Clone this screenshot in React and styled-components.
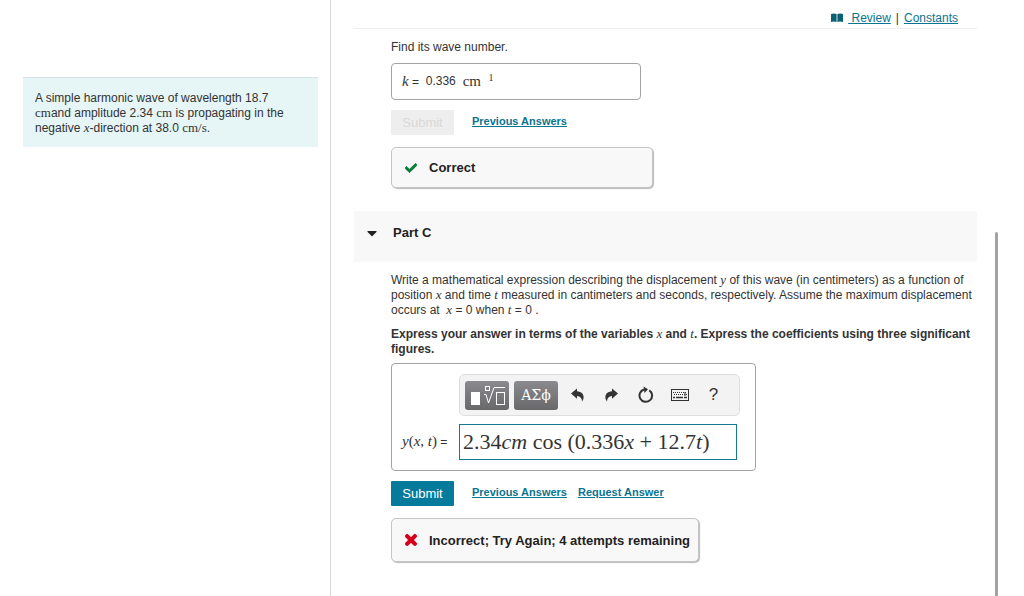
import React, { useState } from "react";
import styled, { createGlobalStyle } from "styled-components";
import { FaCheck, FaTimes, FaCaretDown } from "react-icons/fa";

const GlobalStyle = createGlobalStyle`
  * {
    box-sizing: border-box;
  }
  body {
    margin: 0;
    background-color: #ffffff;
    color: #333333;
    font-family: "Liberation Sans", Arial, sans-serif;
    font-size: 12px;
    line-height: 15px;
  }
  p, h2 {
    margin: 0;
  }
`;

const Page = styled.div`
  display: flex;
  min-height: 100vh;
`;

const Sidebar = styled.aside`
  flex: 0 0 331px;
  padding: 77px 12px 0 23px;
  border-right: 1px solid #d8d8d8;
`;

const Problem = styled.div`
  padding: 13px 12px 11px;
  background-color: #e6f5f6;
  border-top: 1px solid #d3e3e4;
`;

const Main = styled.main`
  flex: 1;
  min-width: 0;
  padding: 0 18px 0 23px;
`;

const ScrollRail = styled.div`
  flex: 0 0 29px;
  display: flex;
  padding-top: 232px;
`;

const ScrollThumb = styled.div`
  width: 3px;
  background-color: #a3a3a3;
  border-radius: 2px 2px 0 0;
`;

const TopBar = styled.nav`
  display: flex;
  align-items: center;
  justify-content: flex-end;
  gap: 5px;
  height: 29px;
  padding: 8px 19px 0 0;
  border-bottom: 1px solid #eeeeee;
`;

const Link = styled.a`
  color: #0b7490;
  text-decoration: underline;
`;

const ActionLink = styled(Link)`
  padding-bottom: 3px;
  font-size: 11px;
  font-weight: 700;
`;

const Body = styled.section`
  padding: 11px 0 0 37px;
`;

const MathText = styled.span`
  font-family: "Liberation Serif", "Times New Roman", serif;
  font-size: ${(props) => (props.$large ? "15px" : "13px")};
  line-height: 1;
  font-weight: 400;
  font-style: ${(props) => (props.$italic ? "italic" : "normal")};
`;

const Exponent = styled.sup`
  margin-left: 5px;
  padding-bottom: 8px;
  font-family: "Liberation Serif", "Times New Roman", serif;
  font-size: 10px;
  line-height: 1;
`;

const SolvedBox = styled.div`
  display: flex;
  align-items: center;
  width: 250px;
  height: 37px;
  margin-top: 8px;
  padding: 0 10px;
  border: 1px solid #a3a3a3;
  border-radius: 4px;
`;

const SolvedInput = styled.input`
  width: 37px;
  padding: 0;
  border: none;
  background: transparent;
  color: inherit;
  font: inherit;
  outline: none;
`;

const Actions = styled.div`
  display: flex;
  align-items: center;
  gap: 11px;
  margin-top: 10px;
`;

const SubmitButton = styled.button`
  width: 63px;
  height: 25px;
  margin-right: 7px;
  padding: 0;
  border: none;
  border-radius: 1px;
  background-color: #067a9b;
  color: #ffffff;
  font-family: inherit;
  font-size: 13px;
  &:disabled {
    background-color: #eeeeee;
    color: #d9d9d9;
  }
`;

const Feedback = styled.div`
  display: flex;
  align-items: center;
  gap: 12px;
  width: ${(props) => props.$width};
  height: ${(props) => props.$height};
  margin-top: 12px;
  padding: 0 12px;
  background-color: #f8f8f8;
  border: 1px solid #c4c4c4;
  border-radius: 5px;
  box-shadow: 1px 1px 1px #bbbbbb;
  color: #222222;
  font-size: 13px;
  font-weight: 700;
  white-space: nowrap;
`;

const FeedbackIcon = styled.span`
  display: flex;
  justify-content: center;
  flex: 0 0 13px;
  min-width: 0;
  svg {
    flex-shrink: 0;
    stroke: currentColor;
    stroke-width: 35px;
  }
`;

const PartHeader = styled.header`
  display: flex;
  gap: 13px;
  height: 51px;
  margin-top: 23px;
  padding: 14px 10px;
  background-color: #f8f8f8;
  color: #222222;
`;

const PartTitle = styled.h2`
  font-size: 13px;
  line-height: 16px;
`;

const Instruction = styled.p`
  margin-top: 9px;
  font-weight: 700;
`;

const AnswerBox = styled.div`
  display: grid;
  grid-template-columns: 49px 281px;
  column-gap: 8px;
  row-gap: 8px;
  align-items: center;
  align-content: start;
  width: 365px;
  height: 108px;
  margin-top: 6px;
  padding: 10px;
  border: 1px solid #a3a3a3;
  border-radius: 4px;
`;

const Toolbar = styled.div`
  grid-column: 2;
  display: flex;
  align-items: center;
  gap: 5px;
  height: 42px;
  padding: 0 5px;
  background-color: #f3f3f3;
  border: 1px solid #dedede;
  border-radius: 5px;
`;

const PaletteButton = styled.button`
  display: flex;
  align-items: center;
  justify-content: center;
  width: 44px;
  height: 29px;
  padding: 0;
  border: none;
  border-radius: 3px;
  background: linear-gradient(#8b8b8f, #68686b);
  color: #ffffff;
  font-family: "DejaVu Serif", serif;
  font-size: 14px;
`;

const ToolButton = styled.button`
  display: flex;
  align-items: center;
  justify-content: center;
  width: 29px;
  height: 29px;
  padding: 0;
  border: none;
  background: transparent;
  color: #333333;
  font-family: inherit;
  font-size: 17px;
`;

const AnswerLabel = styled.label`
  white-space: nowrap;
`;

const EquationField = styled.div`
  position: relative;
  width: 278px;
  height: 36px;
  border: 1px solid #157893;
  font-family: "Liberation Serif", "Times New Roman", serif;
  font-size: 22px;
  line-height: 34px;
`;

const EquationInput = styled.input`
  width: 100%;
  height: 100%;
  padding: 0 3px;
  border: none;
  outline: none;
  background: transparent;
  color: transparent;
  caret-color: #333333;
  font: inherit;
`;

const EquationView = styled.div`
  position: absolute;
  inset: 0;
  padding: 0 3px;
  overflow: hidden;
  white-space: pre;
  pointer-events: none;
`;

const X = () => <MathText $italic>x</MathText>;
const T = () => <MathText $italic>t</MathText>;

const BookIcon = () => (
  <svg width="12" height="10" viewBox="0 0 12 10" aria-hidden="true">
    <path d="M0 1Q3 0 5.6 1V9Q3 8 0 9Z" fill="#0c6076" />
    <path d="M6.4 1Q9 0 12 1V9Q9 8 6.4 9Z" fill="#0c6076" />
  </svg>
);

const RootIcon = () => (
  <svg width="37" height="23" viewBox="0 0 37 23" fill="none" stroke="#fff">
    <rect x="2" y="8" width="9" height="13" fill="#fff" stroke="none" />
    <rect x="16.5" y="2.5" width="4" height="4" />
    <path d="M15 10.5H17L19.5 19L25 3.5H36" />
    <rect x="27.5" y="8.5" width="8" height="12" />
  </svg>
);

const UndoIcon = () => (
  <svg width="13" height="14" viewBox="0 0 13 14" fill="#333">
    <path d="M0 5.5L6 0.5V3.2C10.5 3.5 13 6.3 12.6 9.8C12.4 11.2 12 12.4 11 13.4C11 10.4 9.4 8.2 6 8V10.8Z" />
  </svg>
);

const RedoIcon = () => (
  <svg width="13" height="14" viewBox="0 0 13 14" fill="#333">
    <path d="M13 5.5L7 0.5V3.2C2.5 3.5 0 6.3 0.4 9.8C0.6 11.2 1 12.4 2 13.4C2 10.4 3.6 8.2 7 8V10.8Z" />
  </svg>
);

const ResetIcon = () => (
  <svg width="16" height="18" viewBox="0 0 16 18" fill="none">
    <path d="M11.3 4.3A6.3 6.3 0 1 1 6 3.5" stroke="#333" strokeWidth="2" />
    <path d="M5.5 0.5L10 3.3L6.5 7Z" fill="#333" />
  </svg>
);

const KeyboardIcon = () => (
  <svg width="18" height="12" viewBox="0 0 18 12" fill="none" stroke="#333">
    <rect x="0.5" y="0.5" width="17" height="11" />
    <path d="M2 3.5H16M3 5.5H16" strokeDasharray="1 1" />
    <path d="M2 8.5H4M5 8.5H12M13 8.5H16" strokeWidth="1.4" />
    <path d="M14 3V7" />
  </svg>
);

// letters are variables and go italic, function names stay upright
const renderEquation = (value) =>
  value
    .split(/(cos|sin|[a-z]+)/)
    .map((part, i) =>
      /^[a-z]+$/.test(part) && !/^(cos|sin)$/.test(part) ? (
        <i key={i}>{part}</i>
      ) : (
        part
      )
    );

const App = () => {
  const [answer, setAnswer] = useState("2.34cm cos (0.336x + 12.7t)");

  return (
    <Page>
      <GlobalStyle />
      <Sidebar>
        <Problem>
          A simple harmonic wave of wavelength 18.7
          <br />
          <MathText>cm</MathText>and amplitude 2.34 <MathText>cm</MathText> is
          propagating in the negative <X />
          -direction at 38.0 <MathText>cm/s</MathText>.
        </Problem>
      </Sidebar>

      <Main>
        <TopBar>
          <BookIcon />
          <Link href="#review">&nbsp;Review</Link>
          <span>|</span>
          <Link href="#constants">Constants</Link>
        </TopBar>

        {/* part B */}
        <Body>
          <p>Find its wave number.</p>
          <SolvedBox>
            <label htmlFor="wave-number">
              <MathText $italic $large>
                k
              </MathText>{" "}
              =&nbsp;&nbsp;
            </label>
            <SolvedInput id="wave-number" value="0.336" readOnly />
            <MathText $large>cm</MathText>
            <Exponent>&nbsp;1</Exponent>
          </SolvedBox>
          <Actions>
            <SubmitButton disabled>Submit</SubmitButton>
            <ActionLink href="#previous-b">Previous Answers</ActionLink>
          </Actions>
          <Feedback $width="262px" $height="41px">
            <FeedbackIcon>
              <FaCheck color="#0a7d3b" size="12" />
            </FeedbackIcon>
            Correct
          </Feedback>
        </Body>

        {/* part C */}
        <PartHeader>
          <FaCaretDown size="16" />
          <PartTitle>Part C</PartTitle>
        </PartHeader>
        <Body>
          <p>
            Write a mathematical expression describing the displacement{" "}
            <MathText $italic>y</MathText> of this wave (in centimeters) as a
            function of position <X /> and time <T /> measured in cantimeters
            and seconds, respectively. Assume the maximum displacement occurs at
            &nbsp;
            <X /> = 0 when <T /> = 0 .
          </p>
          <Instruction>
            Express your answer in terms of the variables <X /> and <T />.
            Express the coefficients using three significant figures.
          </Instruction>
          <AnswerBox>
            <Toolbar>
              <PaletteButton aria-label="Templates">
                <RootIcon />
              </PaletteButton>
              <PaletteButton>ΑΣϕ</PaletteButton>
              <ToolButton aria-label="Undo">
                <UndoIcon />
              </ToolButton>
              <ToolButton aria-label="Redo">
                <RedoIcon />
              </ToolButton>
              <ToolButton aria-label="Reset">
                <ResetIcon />
              </ToolButton>
              <ToolButton aria-label="Keyboard shortcuts">
                <KeyboardIcon />
              </ToolButton>
              <ToolButton>?</ToolButton>
            </Toolbar>
            <AnswerLabel htmlFor="displacement">
              <MathText $large>
                <i>y</i>(<i>x</i>, <i>t</i>)
              </MathText>{" "}
              =
            </AnswerLabel>
            <EquationField>
              <EquationInput
                id="displacement"
                value={answer}
                onChange={(e) => setAnswer(e.target.value)}
              />
              <EquationView aria-hidden="true">
                {renderEquation(answer)}
              </EquationView>
            </EquationField>
          </AnswerBox>
          <Actions>
            <SubmitButton>Submit</SubmitButton>
            <ActionLink href="#previous-c">Previous Answers</ActionLink>
            <ActionLink href="#request">Request Answer</ActionLink>
          </Actions>
          <Feedback $width="308px" $height="44px">
            <FeedbackIcon>
              <FaTimes color="#d6001c" size="16" />
            </FeedbackIcon>
            Incorrect; Try Again; 4 attempts remaining
          </Feedback>
        </Body>
      </Main>

      <ScrollRail>
        <ScrollThumb />
      </ScrollRail>
    </Page>
  );
};

export default App;
